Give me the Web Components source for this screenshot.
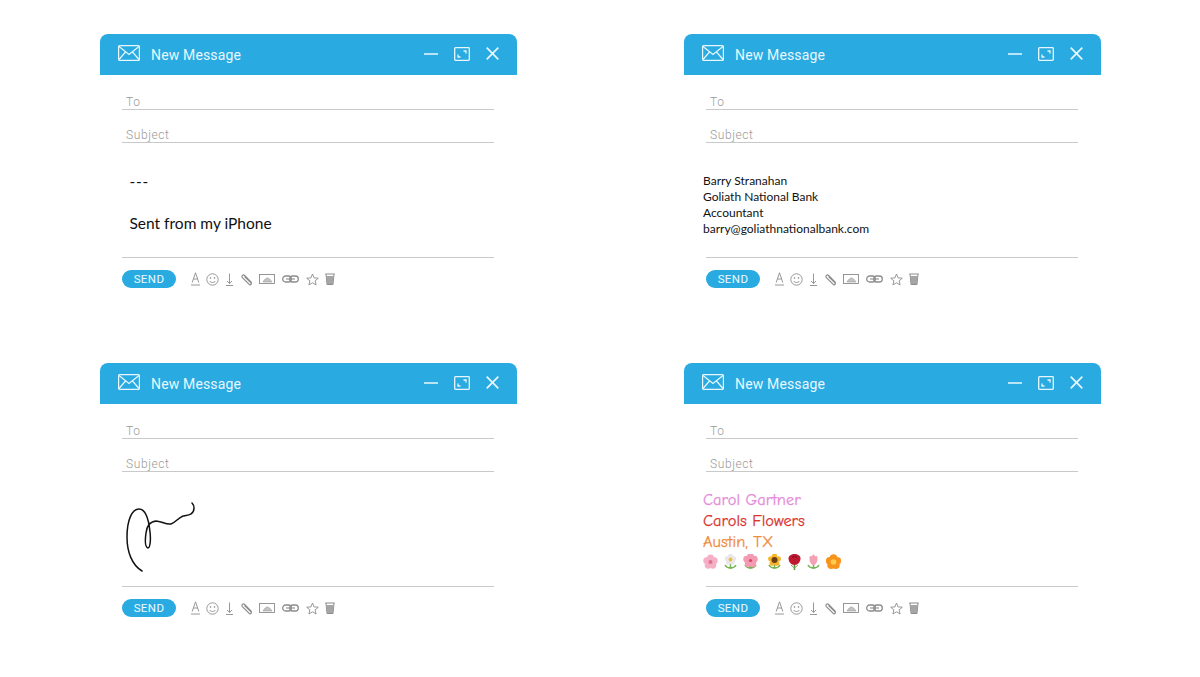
<!DOCTYPE html>
<html lang="en">
<head>
<meta charset="utf-8">
<title>New Message</title>
<style>
  html, body { margin: 0; background: #fff; }
  body { font-family: "Lato", "Noto Sans", sans-serif; }
</style>
</head>
<body>
<mail-board>
  <mail-window>
    <plain-sig>
      <p class="dash">---</p>
      <p>Sent from my iPhone</p>
    </plain-sig>
  </mail-window>
  <mail-window>
    <contact-sig>
      <div>Barry Stranahan</div>
      <div>Goliath National Bank</div>
      <div>Accountant</div>
      <div>barry@goliathnationalbank.com</div>
    </contact-sig>
  </mail-window>
  <mail-window>
    <scribble-sig></scribble-sig>
  </mail-window>
  <mail-window>
    <flower-sig>
      <div style="color:#e58ad8">Carol Gartner</div>
      <div style="color:#d9342f">Carols Flowers</div>
      <div style="color:#f08a3c">Austin, TX</div>
    </flower-sig>
  </mail-window>
</mail-board>

<script>
class MailBoard extends HTMLElement {
  connectedCallback() {
    this.attachShadow({ mode: "open" }).innerHTML = `
      <style>
        :host {
          display: grid;
          grid-template-columns: 417px 417px;
          grid-auto-rows: 329px;
          column-gap: 167px;
          padding: 34px 99px 0 100px;
        }
      </style>
      <slot></slot>
    `;
  }
}

class MailWindow extends HTMLElement {
  connectedCallback() {
    this.attachShadow({ mode: "open" }).innerHTML = `
      <style>
        :host { display: block; font-family: "Roboto", sans-serif; }
        .head {
          height: 41px;
          display: flex;
          align-items: center;
          background: #29abe2;
          border-radius: 8px 8px 0 0;
          padding: 0 18px;
          color: #e8f7fd;
          font-size: 14px;
          letter-spacing: .15px;
        }
        .head svg { display: block; fill: none; stroke: #e8f7fd; }
        .env { margin-right: 11px; margin-top: -3px; }
        .title { flex: 1; margin-top: 1px; }
        .btns { display: flex; align-items: center; gap: 16px; margin-top: -2px; }
        .body { padding: 0 23px 0 22px; }
        .field {
          height: 33px;
          box-sizing: border-box;
          border-bottom: 1px solid #c9c9c9;
          padding: 0 0 0 4px;
          display: flex;
          align-items: flex-end;
          color: #9a9a9a;
          font-size: 12px;
          font-weight: 300;
          letter-spacing: .6px;
          line-height: 14px;
        }
        .field.first { height: 35px; }
        .sig { height: 114px; border-bottom: 1px solid #c9c9c9; }
        .foot { display: flex; align-items: center; padding-top: 12px; }
        .send {
          width: 54px;
          height: 18px;
          border-radius: 9px;
          background: #29abe2;
          color: #eefaff;
          font-size: 11.500px;
          letter-spacing: .4px;
          display: flex;
          align-items: center;
          justify-content: center;
          margin-right: 15px;
        }
      </style>
      <div class="head">
        <svg class="env" width="22" height="16" viewBox="0 0 22 16" stroke-width="1.2">
          <rect x=".6" y=".6" width="20.8" height="14.8" rx="1"/>
          <path d="M1 1.5 11 9.5 21 1.5M1 14.5 7.5 7M21 14.5 14.5 7"/>
        </svg>
        <span class="title">New Message</span>
        <span class="btns">
          <svg width="14" height="14" viewBox="0 0 14 14" stroke-width="1.5"><path d="M0 7H14"/></svg>
          <svg width="16" height="14" viewBox="0 0 16 14" stroke-width="1.3"><rect x=".7" y=".7" width="14.6" height="12.6" rx=".8"/><path d="M9.5 4H12V6.5M6.5 10H4V7.5"/></svg>
          <svg width="13" height="13" viewBox="0 0 13 13" stroke-width="1.7"><path d="M.7.7 12.3 12.3M12.3.7.7 12.3"/></svg>
        </span>
      </div>
      <div class="body">
        <div class="field first">To</div>
        <div class="field">Subject</div>
        <div class="sig"><slot></slot></div>
        <div class="foot">
          <span class="send">SEND</span>
          <mail-tools></mail-tools>
        </div>
      </div>
    `;
  }
}

class MailTools extends HTMLElement {
  connectedCallback() {
    this.attachShadow({ mode: "open" }).innerHTML = `
      <style>
        :host { display: flex; align-items: center; gap: 7px; }
        svg { display: block; fill: none; stroke: #8c8c8c; stroke-width: .9; }
      </style>
      <svg width="9" height="14" viewBox="0 0 9 14"><path d="M1.2 10.500 4.500 .8 7.800 10.500M2.400 7H6.600M0 13H9"/></svg>
      <svg width="13" height="13" viewBox="0 0 13 13" style="margin-left:-1px"><circle cx="6.500" cy="6.500" r="5.700"/><circle cx="4.500" cy="5" r=".5"/><circle cx="8.500" cy="5" r=".5"/><path d="M3.500 8C5 10 8 10 9.500 8"/></svg>
      <svg width="7" height="13" viewBox="0 0 7 13"><path d="M3.500 .5V10.500M1 8 3.500 10.500 6 8M0 12.500H7"/></svg>
      <svg width="13" height="13" viewBox="0 0 13 13"><path d="M11.700 9.600 4.600 2.500C3.100 1 .9 3 2.400 4.600L9.200 11.400C10.300 12.500 12 11 11 9.800L4.600 3.500" stroke-width="1.200"/></svg>
      <svg width="16" height="10" viewBox="0 0 16 10" style="margin-left:-1px"><rect x=".5" y=".5" width="15" height="9"/><path d="M4 8C5.500 5.500 6.800 4 8.500 4S11 5.500 13 8Z" fill="#c4c4c4" stroke-width=".5"/></svg>
      <svg width="17" height="8" viewBox="0 0 17 8"><rect x=".7" y="1" width="8.600" height="6" rx="3" stroke-width="1.300"/><rect x="7.700" y="1" width="8.600" height="6" rx="3" stroke-width="1.300"/><path d="M4 4H13" stroke-width="1.100"/></svg>
      <svg width="13" height="13" viewBox="0 0 13 13"><path d="M6.500 1 8.100 4.900 12.300 5.200 9.100 7.900 10.100 12 6.500 9.800 2.900 12 3.900 7.900.7 5.200 4.900 4.900Z"/></svg>
      <svg width="10" height="12" viewBox="0 0 10 12" style="margin-left:-1px"><path d="M.3 1H9.700M1 1 2 11.500H8L9 1" stroke-width="1"/><path d="M1.400 3H8.600L8 11H2Z" fill="#a5a5a5" stroke="none"/></svg>
    `;
  }
}

class PlainSig extends HTMLElement {
  connectedCallback() {
    this.attachShadow({ mode: "open" }).innerHTML = `
      <style>
        :host {
          display: flex;
          flex-direction: column;
          gap: 21px;
          padding: 28px 0 0 7.500px;
          color: #111;
          font-family: "Lato", sans-serif;
          font-size: 15.500px;
          line-height: 21px;
        }
        ::slotted(p) { margin: 0; }
        ::slotted(.dash) { letter-spacing: .7px; }
      </style>
      <slot></slot>
    `;
  }
}

class ContactSig extends HTMLElement {
  connectedCallback() {
    this.attachShadow({ mode: "open" }).innerHTML = `
      <style>
        :host {
          display: block;
          margin-left: -3px;
          padding-top: 30px;
          color: #111;
          font-family: "Lato", sans-serif;
          font-size: 12px;
          line-height: 16px;
        }
      </style>
      <slot></slot>
    `;
  }
}

class ScribbleSig extends HTMLElement {
  connectedCallback() {
    this.attachShadow({ mode: "open" }).innerHTML = `
      <style>
        :host { display: block; padding-top: 28px; margin-left: -2px; }
        svg { display: block; fill: none; stroke: #111; stroke-width: 1.500; stroke-linecap: round; }
      </style>
      <svg width="80" height="74" viewBox="0 0 80 74">
        <path d="M22 71C12 65 7 52 7 37 7 20 12 9 19 9 27 9 29 22 30 32 31 40 30 48 28 48 25 47 25 40 26 33 27 26 29 22 36 21 41 21 46 25 51 24 55 23 58 18 63 16 68 15 74 15 74 8 74 6 73 4 72 3"/>
      </svg>
    `;
  }
}

class FlowerSig extends HTMLElement {
  connectedCallback() {
    const petals = (cx, cy, r, d, col) => [0, 72, 144, 216, 288].map(a =>
      `<circle cx="${cx + d * Math.sin(a * Math.PI / 180)}" cy="${cy - d * Math.cos(a * Math.PI / 180)}" r="${r}" fill="${col}"/>`).join("");
    const stem = `<path d="M7.500 8V15M7.500 14C5 14 3 13 2 11M7.500 14C10 14 12 13 13 11" stroke="#77b255" stroke-width="1.500" fill="none"/>`;
    const blossom = (b, w, extra = "") => `<svg width="${w}" height="16" viewBox="0 0 ${w} 16" style="${extra}">${b}</svg>`;
    this.attachShadow({ mode: "open" }).innerHTML = `
      <style>
        :host {
          display: block;
          margin-left: -3px;
          padding-top: 17px;
          font-family: "Comic Sans MS", "Comic Neue", cursive;
          font-size: 16.400px;
          line-height: 21px;
          -webkit-text-stroke: .25px currentColor;
        }
        .row { display: flex; gap: 5px; height: 16px; margin-top: 2px; }
        svg { display: block; }
      </style>
      <slot></slot>
      <div class="row">
        ${blossom(petals(7.5, 8, 3.4, 4, "#f5b0c6") + `<circle cx="7.5" cy="8" r="2" fill="#e0728f"/>`, 15)}
        ${blossom(stem + petals(7.5, 5.5, 2.6, 3.2, "#e8e8e8") + `<circle cx="7.5" cy="5.5" r="1.9" fill="#f2b84b"/>`, 15)}
        ${blossom(stem + petals(7.5, 6.5, 3.4, 4, "#f49ab2") + `<circle cx="7.5" cy="6.5" r="1.6" fill="#d8436a"/>`, 15)}
        ${blossom(stem + petals(7.5, 6, 2.6, 4, "#f7b52c") + `<circle cx="7.5" cy="6" r="3" fill="#6b3f12"/>`, 15, "margin-left:4px")}
        ${blossom(`<path d="M6.500 9V16" stroke="#5c913b" stroke-width="1.500"/><path d="M3 11 6.500 14 10 11" stroke="#77b255" fill="none"/><path d="M.5 4.500C.5 1.500 3.500 0 6.500 0S12.500 1.500 12.500 4.500 10 11 6.500 11 .5 7.500 .5 4.500Z" fill="#be1931"/><path d="M4 3.500C5 2.300 8 2.300 9 3.500" stroke="#7a0f20" fill="none"/>`, 13, "margin-left:1px")}
        ${blossom(stem + `<path d="M3.500 4.500C3.500 1.500 5 1 5.500 2.500L7.500 .2 9.500 2.500C10 1 11.500 1.500 11.500 4.500 11.500 8.500 9.500 11 7.500 11S3.500 8.500 3.500 4.500Z" fill="#f4a0b5"/>`, 15)}
        ${blossom(petals(7.5, 8, 3.8, 4, "#f7941d") + `<circle cx="7.5" cy="8" r="2.8" fill="#ffcc4d"/>`, 15)}
      </div>
    `;
  }
}

customElements.define("mail-board", MailBoard);
customElements.define("mail-window", MailWindow);
customElements.define("mail-tools", MailTools);
customElements.define("plain-sig", PlainSig);
customElements.define("contact-sig", ContactSig);
customElements.define("scribble-sig", ScribbleSig);
customElements.define("flower-sig", FlowerSig);
</script>
</body>
</html>
